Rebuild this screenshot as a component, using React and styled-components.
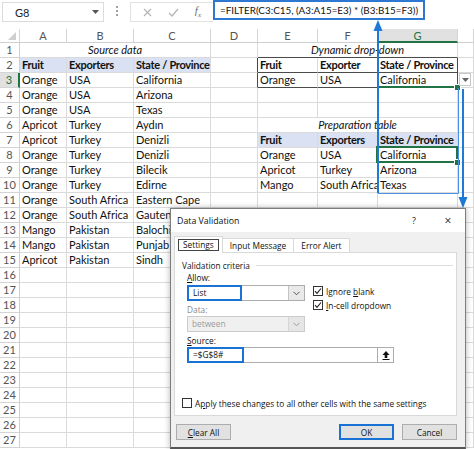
import React from 'react';
import styled, { createGlobalStyle, css } from 'styled-components';

const GlobalStyle = createGlobalStyle`
  html, body { margin: 0; padding: 0; background: #fff; }
  body { font-family: Lato, "Liberation Sans", sans-serif; }
`;

const COLS = [20, 47, 67, 77, 47, 60, 60, 80, 16];
const GREEN = '#217346';
const BLUE = '#1f7ad6';

const Page = styled.div`
  position: relative;
  width: 474px;
  height: 449px;
  overflow: hidden;
  background: #fff;
`;

/* ---------- formula bar ---------- */

const FormulaBar = styled.div`
  display: flex;
  align-items: flex-start;
  height: 29px;
  padding-left: 2px;
  box-sizing: border-box;
`;

const NameBox = styled.div`
  box-sizing: border-box;
  width: 102px;
  height: 20px;
  margin-top: 2px;
  border: 1px solid #dcdcdc;
  display: flex;
  align-items: center;
  justify-content: space-between;
  padding: 0 4px 0 12px;
  font-size: 11px;
  color: #222;
`;

const Grip = styled.div`
  width: 26px;
  height: 22px;
  display: flex;
  align-items: center;
  justify-content: center;
`;

const IconBox = styled.div`
  box-sizing: border-box;
  width: 83px;
  height: 20px;
  margin-top: 2px;
  border: 1px solid #e2e2e2;
  border-right: none;
  display: flex;
  align-items: center;
  justify-content: space-around;
  padding: 0 4px;
`;

const Fx = styled.span`
  font-family: "Liberation Serif", serif;
  font-style: italic;
  font-size: 11px;
  color: #6b6b6b;
  sub { font-size: 7px; }
`;

const FormulaInput = styled.div`
  box-sizing: border-box;
  width: 212px;
  height: 20px;
  border: 2px solid #2e78d2;
  padding-left: 5px;
  font-size: 9.9px;
  line-height: 16px;
  color: #111;
  white-space: nowrap;
`;

/* ---------- sheet grid ---------- */

const Sheet = styled.div`
  display: grid;
  grid-template-columns: ${COLS.map((w) => `${w}px`).join(' ')};
  grid-template-rows: 14px;
  grid-auto-rows: 15px;
`;

const HeadCell = styled.div`
  box-sizing: border-box;
  border-right: 1px solid #d4d4d4;
  border-bottom: 1px solid ${(p) => (p.$on ? GREEN : '#cfcfcf')};
  ${(p) => p.$on && css`border-bottom-width: 2px;`}
  background: ${(p) => (p.$on ? '#e1e1e1' : '#fff')};
  color: ${(p) => (p.$on ? GREEN : '#555')};
  font-size: 11px;
  line-height: 13px;
  text-align: center;
  position: relative;
`;

const Corner = styled.div`
  box-sizing: border-box;
  border-right: 1px solid #d4d4d4;
  border-bottom: 1px solid #cfcfcf;
  display: flex;
  align-items: flex-end;
  justify-content: flex-end;
  padding: 0 3px 2px 0;
`;

const RowHead = styled.div`
  box-sizing: border-box;
  border-right: ${(p) => (p.$on ? `2px solid ${GREEN}` : '1px solid #cfcfcf')};
  border-bottom: 1px solid #d4d4d4;
  background: ${(p) => (p.$on ? '#e1e1e1' : '#fff')};
  color: ${(p) => (p.$on ? GREEN : '#555')};
  font-size: 11px;
  line-height: 14px;
  text-align: center;
`;

const Cell = styled.div`
  box-sizing: border-box;
  grid-column: span ${(p) => p.$span || 1};
  border-right: 1px solid ${(p) => (p.$br ? '#4a4a4a' : '#dadada')};
  border-bottom: 1px solid ${(p) => (p.$bb ? '#4a4a4a' : '#dadada')};
  background: ${(p) => (p.$fill ? '#d9e1f2' : 'transparent')};
  font-weight: ${(p) => (p.$bold ? 700 : 400)};
  font-style: ${(p) => (p.$italic ? 'italic' : 'normal')};
  letter-spacing: ${(p) => (p.$bold ? '-0.3px' : '0')};
  text-align: ${(p) => (p.$center ? 'center' : 'left')};
  padding: 0 2px;
  font-size: 11px;
  line-height: 14px;
  color: #111;
  white-space: nowrap;
  position: relative;

  ${(p) => p.$sel && css`
    &::after {
      content: '';
      position: absolute;
      left: -2px; top: -2px; right: -1px; bottom: -1px;
      border: 2px solid ${GREEN};
      pointer-events: none;
    }
  `}
  ${(p) => p.$selBottom && css`
    &::after {
      content: '';
      position: absolute;
      left: 0; right: -1px; bottom: -1px;
      height: 2px;
      background: ${GREEN};
    }
  `}
  ${(p) => (p.$sel || p.$selBottom) && css`
    &::before {
      content: '';
      position: absolute;
      right: -4px; bottom: -4px;
      width: 5px; height: 5px;
      background: ${GREEN};
      border: 1px solid #fff;
      z-index: 2;
    }
  `}
`;

const DropButton = styled.div`
  position: absolute;
  right: -14px;
  top: 0;
  width: 12px;
  height: 13px;
  box-sizing: border-box;
  border: 1px solid #c8c8c8;
  background: #fff;
  display: flex;
  align-items: center;
  justify-content: center;
  z-index: 3;
`;

/* ---------- annotation ---------- */

const Annotation = styled.svg`
  position: absolute;
  left: 0;
  top: 0;
  pointer-events: none;
  z-index: 4;
`;

/* ---------- dialog ---------- */

const Dialog = styled.div`
  position: absolute;
  left: 170px;
  top: 208px;
  width: 296px;
  height: 241px;
  box-sizing: border-box;
  border: 1px solid #7d7d7d;
  border-bottom: 2px solid #555;
  background: #f0f0f0;
  box-shadow: 0 0 6px rgba(0, 0, 0, 0.3);
  z-index: 5;
  font-family: "Open Sans", "Noto Sans", sans-serif;
  font-size: 8.3px;
  color: #111;
  display: flex;
  flex-direction: column;
`;

const TitleBar = styled.div`
  height: 23px;
  background: #fff;
  display: flex;
  align-items: center;
  padding-left: 6px;
  font-size: 8.8px;
`;

const TitleText = styled.span`
  flex: 1;
`;

const TitleButton = styled.span`
  width: 34px;
  text-align: center;
  font-size: ${(p) => p.$size || 9}px;
  color: #222;
`;

const DialogBody = styled.div`
  flex: 1;
  padding: 5px 8px 0 3px;
  display: flex;
  flex-direction: column;
`;

const Tabs = styled.div`
  display: flex;
  align-items: flex-end;
  height: 16px;
  position: relative;
  z-index: 1;
  margin-bottom: -1px;
`;

const Tab = styled.div`
  box-sizing: border-box;
  height: ${(p) => (p.$active ? 17 : 15)}px;
  padding: 0 ${(p) => (p.$active ? 3 : 7)}px;
  border: 1px solid #d9d9d9;
  border-bottom: ${(p) => (p.$active ? 'none' : '1px solid #d9d9d9')};
  margin-left: ${(p) => (p.$active ? 0 : -1)}px;
  background: #fff;
  display: flex;
  align-items: center;
`;

const FocusLabel = styled.span`
  border: 1px solid #444;
  padding: 0 4px;
  line-height: 10px;
`;

const Panel = styled.div`
  box-sizing: border-box;
  height: 164px;
  border: 1px solid #d9d9d9;
  background: #fff;
  display: flex;
  flex-direction: column;
  padding: 6px 3px 5px 7px;
`;

const Group = styled.div`
  display: flex;
  align-items: center;
  gap: 6px;
  height: 12px;
  &::after {
    content: '';
    flex: 1;
    border-top: 1px solid #dcdcdc;
  }
`;

const Criteria = styled.div`
  padding-left: 5px;
  display: flex;
  flex-direction: column;
`;

const Label = styled.div`
  height: 12px;
  line-height: 12px;
  margin-top: ${(p) => p.$mt || 0}px;
  color: ${(p) => (p.$disabled ? '#8a8a8a' : '#111')};
`;

const Row = styled.div`
  display: flex;
  align-items: flex-start;
`;

const LeftCol = styled.div`
  width: 118px;
  display: flex;
  flex-direction: column;
`;

const RightCol = styled.div`
  margin-left: 8px;
  display: flex;
  flex-direction: column;
`;

const Combo = styled.div`
  box-sizing: border-box;
  width: ${(p) => p.$w || 118}px;
  height: 16px;
  margin-top: ${(p) => p.$mt || 0}px;
  border: 1px solid ${(p) => (p.$disabled ? '#cccccc' : '#adadad')};
  background: ${(p) => (p.$disabled ? '#f0f0f0' : '#fff')};
  color: ${(p) => (p.$disabled ? '#9a9a9a' : '#111')};
  display: flex;
  align-items: stretch;
`;

const ComboText = styled.div`
  box-sizing: border-box;
  width: ${(p) => p.$w}px;
  margin: -1px 0 -1px -1px;
  border: ${(p) => (p.$focus ? '2px solid #1a73d4' : 'none')};
  padding-left: ${(p) => (p.$focus ? 4 : 5)}px;
  line-height: 12px;
  display: flex;
  align-items: center;
`;

const ComboSpacer = styled.div`
  flex: 1;
`;

const ComboArrow = styled.div`
  width: 15px;
  border-left: 1px solid ${(p) => (p.$disabled ? '#d6d6d6' : '#c4c4c4')};
  background: ${(p) => (p.$disabled ? '#e6e6e6' : '#e9e9e9')};
  display: flex;
  align-items: center;
  justify-content: center;
`;

const RefButton = styled.div`
  width: 15px;
  border-left: 1px solid #adadad;
  background: #fdfdfd;
  display: flex;
  align-items: center;
  justify-content: center;
`;

const Check = styled.label`
  display: flex;
  align-items: center;
  gap: 3px;
  height: 14px;
  margin-top: ${(p) => p.$mt || 0}px;
`;

const Box = styled.span`
  box-sizing: border-box;
  width: 10px;
  height: 10px;
  border: 1px solid #333;
  background: #fff;
  display: flex;
  align-items: center;
  justify-content: center;
`;

const Footer = styled.div`
  display: flex;
  align-items: center;
  gap: 8px;
  margin-top: 8px;
  padding-left: 2px;
`;

const Button = styled.div`
  box-sizing: border-box;
  width: 55px;
  height: 16px;
  border: ${(p) => (p.$primary ? '2px solid #1a73d4' : '1px solid #adadad')};
  background: #e1e1e1;
  display: flex;
  align-items: center;
  justify-content: center;
  margin-left: ${(p) => (p.$push ? 'auto' : '0')};
`;

/* ---------- data ---------- */

const LETTERS = ['A', 'B', 'C', 'D', 'E', 'F', 'G', 'H'];

const t = (text, o = {}) => ({ text, ...o });
const e = (o = {}) => ({ text: '', ...o });

const src = [
  ['Orange', 'USA', 'Arizona'],
  ['Orange', 'USA', 'Texas'],
  ['Apricot', 'Turkey', 'Aydın'],
  ['Apricot', 'Turkey', 'Denizli'],
  ['Orange', 'Turkey', 'Denizli'],
  ['Orange', 'Turkey', 'Bilecik'],
  ['Orange', 'Turkey', 'Edirne'],
  ['Orange', 'South Africa', 'Eastern Cape'],
  ['Orange', 'South Africa', 'Gauteng'],
  ['Mango', 'Pakistan', 'Balochistan'],
  ['Mango', 'Pakistan', 'Punjab'],
  ['Apricot', 'Pakistan', 'Sindh'],
];

const right = {
  6: [t('Preparation table', { span: 3, italic: true, center: true })],
  7: [t('Fruit', { bold: true, fill: true }), t('Exporters', { bold: true, fill: true }), t('State / Province', { bold: true, fill: true })],
  8: [t('Orange'), t('USA'), t('California', { sel: true })],
  9: [t('Apricot'), t('Turkey'), t('Arizona')],
  10: [t('Mango'), t('South Africa'), t('Texas')],
};

const buildRows = () => {
  const rows = [
    [t('Source data', { span: 3, italic: true, center: true }), e(), t('Dynamic drop-down', { span: 3, italic: true, center: true, bb: true }), e()],
    [
      t('Fruit', { bold: true, fill: true }), t('Exporters', { bold: true, fill: true }), t('State / Province', { bold: true, fill: true }),
      e({ br: true }),
      t('Fruit', { bold: true, bb: true }), t('Exporter', { bold: true, bb: true }), t('State / Province', { bold: true, bb: true, br: true }),
      e(),
    ],
    [
      t('Orange'), t('USA'), t('California'),
      e({ br: true }),
      t('Orange', { bb: true }), t('USA', { bb: true }), t('California', { bb: true, br: true, selBottom: true, drop: true }),
      e(),
    ],
  ];
  for (let r = 4; r <= 27; r++) {
    const s = src[r - 4];
    const left = s ? s.map((x) => t(x)) : [e(), e(), e()];
    const rr = right[r] || [e(), e(), e()];
    rows.push([...left, e(), ...rr, e()]);
  }
  return rows;
};

const ROWS = buildRows();

const Caret = ({ color = '#444' }) => (
  <svg width="7" height="4" viewBox="0 0 7 4"><path d="M0 0h7L3.5 4z" fill={color} /></svg>
);

const Chevron = ({ color = '#555' }) => (
  <svg width="7" height="5" viewBox="0 0 7 5"><path d="M0.5 0.8 3.5 3.8 6.5 0.8" fill="none" stroke={color} strokeWidth="1" /></svg>
);

const Tick = () => (
  <svg width="8" height="8" viewBox="0 0 8 8"><path d="M1 4.2 3 6.3 7 1.5" fill="none" stroke="#222" strokeWidth="1.1" /></svg>
);

const CheckBox = ({ checked, children, mt }) => (
  <Check $mt={mt}>
    <Box>{checked && <Tick />}</Box>
    <span>{children}</span>
  </Check>
);

const App = () => (
  <Page>
    <GlobalStyle />
    <FormulaBar>
      <NameBox>
        <span>G8</span>
        <Caret color="#555" />
      </NameBox>
      <Grip>
        <svg width="2" height="10" viewBox="0 0 2 10">
          <rect x="0" y="0" width="2" height="2" fill="#a0a0a0" />
          <rect x="0" y="4" width="2" height="2" fill="#a0a0a0" />
          <rect x="0" y="8" width="2" height="2" fill="#a0a0a0" />
        </svg>
      </Grip>
      <IconBox>
        <svg width="9" height="9" viewBox="0 0 9 9"><path d="M1 1 8 8M8 1 1 8" stroke="#b4b4b4" strokeWidth="1.2" /></svg>
        <svg width="11" height="9" viewBox="0 0 11 9"><path d="M1 5 4 8 10 1" fill="none" stroke="#b4b4b4" strokeWidth="1.2" /></svg>
        <Fx>f<sub>x</sub></Fx>
      </IconBox>
      <FormulaInput>=FILTER(C3:C15, (A3:A15=E3) * (B3:B15=F3))</FormulaInput>
    </FormulaBar>

    <Sheet>
      <Corner>
        <svg width="8" height="8" viewBox="0 0 8 8"><path d="M8 0V8H0z" fill="#cfcfcf" /></svg>
      </Corner>
      {LETTERS.map((l) => (
        <HeadCell key={l} $on={l === 'G'}>{l === 'H' ? '' : l}</HeadCell>
      ))}
      {ROWS.map((cells, i) => (
        <React.Fragment key={i}>
          <RowHead $on={i === 2}>{i + 1}</RowHead>
          {cells.map((c, j) => (
            <Cell
              key={j}
              $span={c.span}
              $bold={c.bold}
              $italic={c.italic}
              $center={c.center}
              $fill={c.fill}
              $br={c.br}
              $bb={c.bb}
              $sel={c.sel}
              $selBottom={c.selBottom}
            >
              {c.text}
              {c.drop && (
                <DropButton><Caret color="#666" /></DropButton>
              )}
            </Cell>
          ))}
        </React.Fragment>
      ))}
    </Sheet>

    <Annotation width="474" height="449" viewBox="0 0 474 449">
      <path d="M378 29V193" stroke={BLUE} strokeWidth="2" />
      <path d="M378 20 373.5 31H382.5z" fill={BLUE} />
      <path d="M378 193.5H458.5V88" stroke="#4a93e2" strokeWidth="1" fill="none" />
      <path d="M463 89V198" stroke={BLUE} strokeWidth="2" />
      <path d="M463 208 458.5 197H467.5z" fill={BLUE} />
    </Annotation>

    <Dialog>
      <TitleBar>
        <TitleText>Data Validation</TitleText>
        <TitleButton>?</TitleButton>
        <TitleButton $size={12}>×</TitleButton>
      </TitleBar>
      <DialogBody>
        <Tabs>
          <Tab $active><FocusLabel>Settings</FocusLabel></Tab>
          <Tab>Input Message</Tab>
          <Tab>Error Alert</Tab>
        </Tabs>
        <Panel>
          <Group>Validation criteria</Group>
          <Criteria>
            <Label $mt={1}><u>A</u>llow:</Label>
            <Row>
              <LeftCol>
                <Combo $mt={1}>
                  <ComboText $w={55} $focus>List</ComboText>
                  <ComboSpacer />
                  <ComboArrow><Chevron /></ComboArrow>
                </Combo>
                <Label $mt={3} $disabled>Data:</Label>
                <Combo $disabled>
                  <ComboText $w={60}>between</ComboText>
                  <ComboSpacer />
                  <ComboArrow $disabled><Chevron color="#9a9a9a" /></ComboArrow>
                </Combo>
              </LeftCol>
              <RightCol>
                <CheckBox checked mt={0}>Ignore <u>b</u>lank</CheckBox>
                <CheckBox checked><u>I</u>n-cell dropdown</CheckBox>
              </RightCol>
            </Row>
            <Label $mt={3}><u>S</u>ource:</Label>
            <Combo $w={207}>
              <ComboText $w={57} $focus>=$G$8#</ComboText>
              <ComboSpacer />
              <RefButton>
                <svg width="8" height="9" viewBox="0 0 8 9">
                  <path d="M4 0 7.5 4H5.3V7H2.7V4H0.5z" fill="#111" />
                  <rect x="0.5" y="8" width="7" height="1" fill="#111" />
                </svg>
              </RefButton>
            </Combo>
          </Criteria>
          <ComboSpacer />
          <CheckBox>A<u>p</u>ply these changes to all other cells with the same settings</CheckBox>
        </Panel>
        <Footer>
          <Button><span><u>C</u>lear All</span></Button>
          <Button $primary $push>OK</Button>
          <Button>Cancel</Button>
        </Footer>
      </DialogBody>
    </Dialog>
  </Page>
);

export default App;
